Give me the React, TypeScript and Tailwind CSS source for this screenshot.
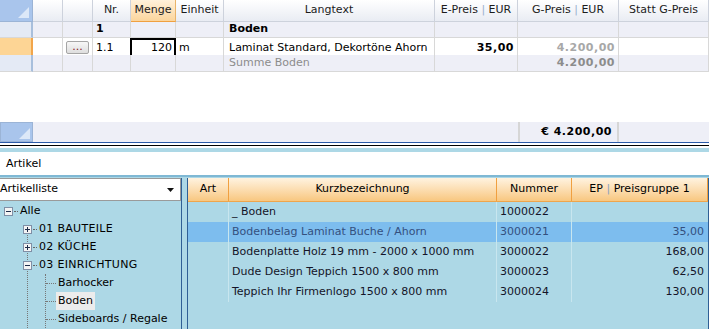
import React from "react";

const topCols = "grid-cols-[33px_30px_30px_38px_45px_48px_211px_83px_101px_90px]";
const botCols = "grid-cols-[41px_268px_75px_136px]";

const headers = ["", "", "", "Nr.", "Menge", "Einheit", "Langtext", "E-Preis | EUR", "G-Preis | EUR", "Statt G-Preis"];

const Selector = ({ tone }: { tone: "head" | "row" | "active" }) => {
    if (tone === "head") {
        return (
            <div className="relative h-full bg-[#a9c5ec] border-r border-b border-[#9bb4d6]">
                <svg className="absolute right-[3px] bottom-[3px]" width="11" height="11" viewBox="0 0 11 11">
                    <polygon points="11,0 11,11 0,11" fill="#dce8f8" />
                </svg>
            </div>
        );
    }
    if (tone === "active") {
        return <div className="h-full bg-[#fdd595] border-r-2 border-b border-r-[#f2a54a] border-b-[#d8d8d8]" />;
    }
    return <div className="h-full bg-[#e4eaf5] border-r-2 border-b border-r-[#a8bfdc] border-b-[#d8d8d8]" />;
};

const Cell = ({ children, className = "" }: { children?: React.ReactNode; className?: string }) => (
    <div className={`h-full border-r border-b border-[#d8d8d8] flex items-center px-[3px] overflow-hidden whitespace-nowrap ${className}`}>
        {children}
    </div>
);

const Box = ({ open }: { open: boolean }) => (
    <svg width="9" height="9" viewBox="0 0 9 9" className="shrink-0">
        <rect x="0.5" y="0.5" width="8" height="8" fill="#f4f4f4" stroke="#7f8fa6" />
        <line x1="2" y1="4.5" x2="7" y2="4.5" stroke="#1f2d4a" />
        {!open && <line x1="4.5" y1="2" x2="4.5" y2="7" stroke="#1f2d4a" />}
    </svg>
);

const articles = [
    { name: "_ Boden", nr: "1000022", ep: "" },
    { name: "Bodenbelag Laminat Buche / Ahorn", nr: "3000021", ep: "35,00", sel: true },
    { name: "Bodenplatte Holz 19 mm - 2000 x 1000 mm", nr: "3000022", ep: "168,00" },
    { name: "Dude Design Teppich 1500 x 800 mm", nr: "3000023", ep: "62,50" },
    { name: "Teppich Ihr Firmenlogo 1500 x 800 mm", nr: "3000024", ep: "130,00" },
];

export default function App() {
    return (
        <div className="w-[709px] h-[329px] overflow-hidden bg-white text-black font-['DejaVu_Sans',sans-serif] text-[11px] flex flex-col">

            {/* Positionen */}
            <div className={`grid ${topCols} h-[22px]`}>
                {headers.map((h, i) =>
                    i === 0 ? (
                        <Selector key={i} tone="head" />
                    ) : (
                        <div
                            key={i}
                            className={`h-full flex items-center justify-center border-r border-b whitespace-nowrap text-[#1c1c1c] ${
                                h === "Menge"
                                    ? "bg-gradient-to-b from-[#fff1db] to-[#fbd59c] border-[#e9b46a] border-b-[#f0a040]"
                                    : "bg-gradient-to-b from-white to-[#e9ecf3] border-[#cdd2dc]"
                            }`}
                        >
                            {h.includes("|") ? (
                                <span>
                                    {h.split("|")[0]}
                                    <span className="text-[#9ab0d0]">|</span>
                                    {h.split("|")[1]}
                                </span>
                            ) : (
                                h
                            )}
                        </div>
                    )
                )}
            </div>

            <div className={`grid ${topCols} h-[16px] bg-[#eeeff7]`}>
                <Selector tone="row" />
                <Cell />
                <Cell />
                <Cell className="font-bold">1</Cell>
                <Cell />
                <Cell />
                <Cell className="font-bold pl-[5px]">Boden</Cell>
                <Cell />
                <Cell />
                <Cell />
            </div>

            <div className={`grid ${topCols} h-[17px] bg-white`}>
                <Selector tone="active" />
                <Cell />
                <Cell className="justify-center px-[2px]">
                    <div className="w-full h-[13px] border border-[#a5a5a5] rounded-[2px] bg-gradient-to-b from-[#f7f7f7] to-[#dedede] flex items-center justify-center text-[#8a1d1d] leading-none pb-[3px]">
                        ...
                    </div>
                </Cell>
                <Cell>1.1</Cell>
                <div className="h-full border-2 border-black flex items-center justify-end px-[2px] -ml-[1px]">120</div>
                <Cell>m</Cell>
                <Cell className="pl-[5px]">Laminat Standard, Dekortöne Ahorn</Cell>
                <Cell className="justify-end font-bold tracking-[0.5px]">35,00</Cell>
                <Cell className="justify-end font-bold text-[#a8a8a8] tracking-[0.5px]">4.200,00</Cell>
                <Cell />
            </div>

            <div className={`grid ${topCols} h-[17px] bg-[#eeeff7]`}>
                <Selector tone="row" />
                <Cell />
                <Cell />
                <Cell />
                <Cell />
                <Cell />
                <Cell className="text-[#8c8c8c] pl-[5px]">Summe Boden</Cell>
                <Cell />
                <Cell className="justify-end font-bold text-[#8c8c8c] tracking-[0.5px]">4.200,00</Cell>
                <Cell />
            </div>

            <div className="h-[50px] bg-white" />

            {/* Summe */}
            <div className="h-[20px] bg-[#eeeff7] flex">
                <div className="relative w-[33px] h-full bg-[#a9c5ec] border border-[#9bb4d6]">
                    <svg className="absolute right-[2px] bottom-[2px]" width="11" height="11" viewBox="0 0 11 11">
                        <polygon points="11,0 11,11 0,11" fill="#dce8f8" />
                    </svg>
                </div>
                <div className="w-[487px] h-full border-r-2 border-[#d6d6d6]" />
                <div className="w-[99px] h-full border-r-2 border-[#d6d6d6] flex items-center justify-end pr-[5px] font-bold tracking-[0.5px]">
                    € 4.200,00
                </div>
            </div>
            <div className="h-px bg-[#2a5aa8]" />
            <div className="h-[2px] bg-white" />
            <div className="h-px bg-black" />
            <div className="h-[2px] bg-white" />
            <div className="h-[4px] bg-[#add8e6]" />

            <div className="h-[23px] bg-white flex items-center pl-[6px] pt-[2px]">Artikel</div>

            {/* Artikel */}
            <div className="flex-1 bg-[#add8e6] border-t-2 border-[#7fb8d4] flex gap-[5px] min-h-0 pt-px">
                <div className="w-[182px] shrink-0 border-r border-[#2f5f95] flex flex-col">
                    <div className="h-[23px] -ml-[2px] bg-white border border-[#9a9a9a] flex items-center justify-between pl-[1px] pr-[6px]">
                        <span>Artikelliste</span>
                        <svg width="7" height="4" viewBox="0 0 7 4">
                            <polygon points="0,0 7,0 3.5,4" fill="#111" />
                        </svg>
                    </div>
                    <div className="flex flex-col pt-[1px]">
                        <div className="h-[18px] flex items-center pl-[4px] gap-[1px]">
                            <Box open />
                            <span className="w-[4px] border-t border-dotted border-[#666]" />
                            <span className="pl-[1px]">Alle</span>
                        </div>
                        <div className="flex flex-col ml-[27px] mt-[9px] border-l border-dotted border-[#777]">
                            {[
                                { t: "01 BAUTEILE", open: false },
                                { t: "02 KÜCHE", open: false },
                                { t: "03 EINRICHTUNG", open: true },
                            ].map((n, i) => (
                                <div key={n.t} className={`h-[18px] flex items-center -ml-[5px] gap-[1px] ${i === 0 ? "-mt-[9px]" : ""}`}>
                                    <Box open={n.open} />
                                    <span className="w-[4px] border-t border-dotted border-[#666]" />
                                    <span className="pl-[1px] tracking-[0.3px]">{n.t}</span>
                                </div>
                            ))}
                            <div className="flex flex-col ml-[17px] border-l border-dotted border-[#777]">
                                {["Barhocker", "Boden", "Sideboards / Regale"].map((c) => (
                                    <div key={c} className="h-[18px] flex items-center">
                                        <span className="w-[10px] border-t border-dotted border-[#777]" />
                                        <span className={`px-[2px] py-[1px] ${c === "Boden" ? "bg-[#ececec]" : ""}`}>{c}</span>
                                    </div>
                                ))}
                            </div>
                        </div>
                    </div>
                </div>

                <div className="flex-1 border-l border-r border-[#2f5f95] flex flex-col">
                    <div className={`grid ${botCols} h-[24px] bg-gradient-to-b from-[#fff3e0] to-[#f8c77f] border-b border-[#eea54c]`}>
                        {["Art", "Kurzbezeichnung", "Nummer", "EP | Preisgruppe 1"].map((h) => (
                            <div key={h} className="border-r border-[#f0a040] flex items-center justify-center whitespace-nowrap">
                                {h.includes("|") ? (
                                    <span>
                                        EP <span className="text-[#8aa0c0]">|</span> Preisgruppe 1
                                    </span>
                                ) : (
                                    h
                                )}
                            </div>
                        ))}
                    </div>
                    {articles.map((a) => (
                        <div
                            key={a.nr}
                            className={`grid ${botCols} h-[20px] ${a.sel ? "bg-[#7dbdee] text-[#34507e]" : "text-[#141428]"}`}
                        >
                            <div className="border-r border-[#c8e6ef]" />
                            <div className="border-r border-[#c8e6ef] flex items-center pl-[3px] whitespace-nowrap">{a.name}</div>
                            <div className="border-r border-[#c8e6ef] flex items-center pl-[3px]">{a.nr}</div>
                            <div className="flex items-center justify-end pr-[4px]">{a.ep}</div>
                        </div>
                    ))}
                </div>
            </div>
        </div>
    );
}
